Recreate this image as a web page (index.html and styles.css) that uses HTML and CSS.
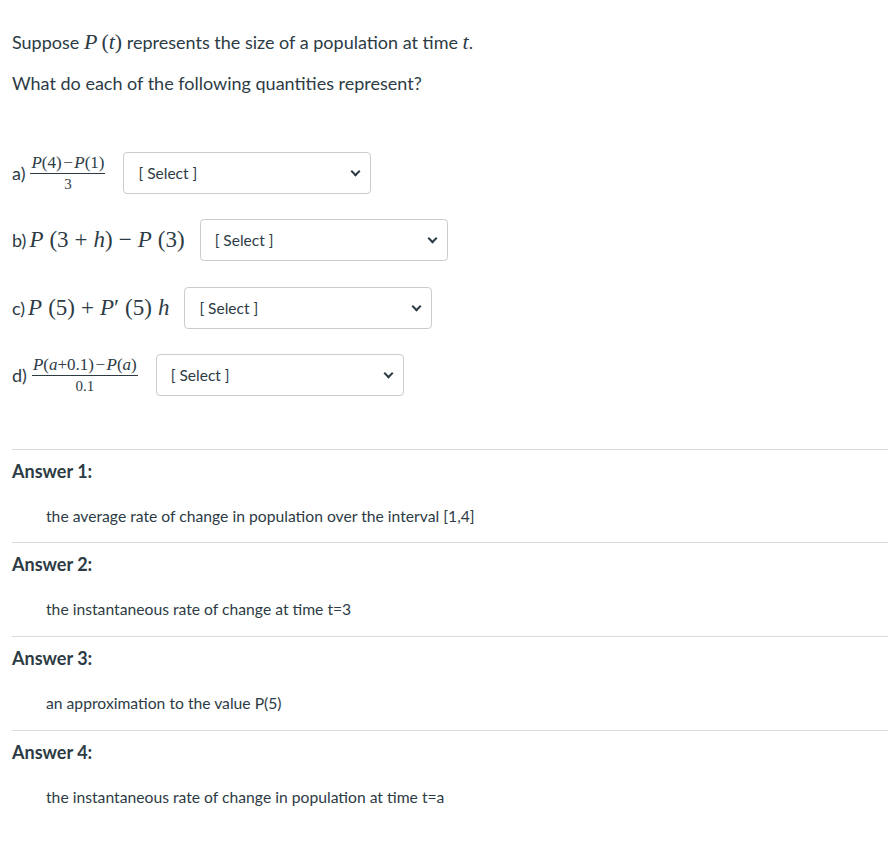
FILE: index.html
```html
<!DOCTYPE html>
<html lang="en">

<head>
    <meta charset="UTF-8">
    <title>Quiz question</title>
    <link rel="stylesheet" href="styles.css">
</head>

<body>
    <div class="question">
        <p class="intro">Suppose <span class="math"><i>P</i><span class="sp"></span>(<i>t</i>)</span> represents the size of a population at time <span class="math"><i>t</i></span>.</p>
        <p class="intro">What do each of the following quantities represent?</p>

        <div class="items">
            <div class="item">
                <span class="label">a)</span>
                <span class="frac">
                    <span class="num"><i>P</i>(4)<span class="op">&minus;</span><i>P</i>(1)</span>
                    <span class="den">3</span>
                </span>
                <div class="select"><span>[ Select ]</span><span class="caret"></span></div>
            </div>
            <div class="item">
                <span class="label">b)</span>
                <span class="math big"><i>P</i><span class="sp"></span>(3<span class="bin">+</span><i>h</i>)<span class="bin">&minus;</span><i>P</i><span class="sp"></span>(3)</span>
                <div class="select"><span>[ Select ]</span><span class="caret"></span></div>
            </div>
            <div class="item">
                <span class="label">c)</span>
                <span class="math big"><i>P</i><span class="sp"></span>(5)<span class="bin">+</span><i>P</i>&prime;<span class="sp"></span>(5)<span class="sp"></span><i>h</i></span>
                <div class="select"><span>[ Select ]</span><span class="caret"></span></div>
            </div>
            <div class="item">
                <span class="label">d)</span>
                <span class="frac">
                    <span class="num"><i>P</i>(<i>a</i>+0.1)<span class="op">&minus;</span><i>P</i>(<i>a</i>)</span>
                    <span class="den">0.1</span>
                </span>
                <div class="select"><span>[ Select ]</span><span class="caret"></span></div>
            </div>
        </div>

        <div class="answers">
            <div class="answer">
                <h4>Answer 1:</h4>
                <p>the average rate of change in population over the interval [1,4]</p>
            </div>
            <div class="answer">
                <h4>Answer 2:</h4>
                <p>the instantaneous rate of change at time t=3</p>
            </div>
            <div class="answer">
                <h4>Answer 3:</h4>
                <p>an approximation to the value P(5)</p>
            </div>
            <div class="answer">
                <h4>Answer 4:</h4>
                <p>the instantaneous rate of change in population at time t=a</p>
            </div>
        </div>
    </div>
</body>

</html>
```

FILE: styles.css
```css
* {
    margin: 0;
    padding: 0;
    box-sizing: border-box;
}

body {
    font-family: Lato, "Noto Sans", sans-serif;
    font-size: 18px;
    line-height: 24px;
    color: #2d3b45;
    background: #fff;
}

.question {
    padding: 30px 0 0 12px;
}

.intro {
    margin-bottom: 17px;
}

.math {
    font-family: "Liberation Serif", "DejaVu Serif", serif;
    font-size: 22px;
}

.math i,
.frac i {
    font-style: italic;
}

.sp {
    display: inline-block;
    width: 4px;
}

.bin {
    padding: 0 5px;
}

.op {
    padding: 0 1.5px;
}

/* rows a) - d) */
.items {
    padding-top: 40px;
}

.item {
    display: flex;
    align-items: center;
    height: 42px;
    margin-bottom: 25.4px;
}

.label {
    margin-right: 3px;
}

.item .big {
    font-size: 23px;
}

.item .big .sp {
    width: 6px;
}

.item .big .bin {
    padding: 0 6px;
}

.frac {
    display: inline-flex;
    flex-direction: column;
    align-items: center;
    font-family: "Liberation Serif", "DejaVu Serif", serif;
    font-size: 17px;
    line-height: 16px;
    margin: 0 3px 0 2px;
}

.frac .num {
    padding: 0 1px 2px;
    border-bottom: 1px solid #2d3b45;
}

.frac .den {
    padding-top: 2px;
    font-size: 15px;
}

.select {
    display: flex;
    align-items: center;
    justify-content: space-between;
    width: 248px;
    height: 42px;
    margin-left: 15px;
    padding: 0 11px 0 14px;
    border: 1px solid #c7cdd1;
    border-radius: 4px;
    font-size: 15.5px;
}

.caret {
    width: 7px;
    height: 7px;
    border-right: 2px solid #2d3b45;
    border-bottom: 2px solid #2d3b45;
    transform: rotate(45deg);
    margin-top: -3px;
}

/* answer key */
.answers {
    padding-top: 27px;
}

.answer {
    border-top: 1px solid #dadde0;
    padding: 9px 0 14.7px;
}

.answer h4 {
    font-size: 18px;
    font-weight: bold;
}

.answer p {
    margin-top: 21px;
    padding-left: 34px;
    font-size: 15.7px;
}
```
